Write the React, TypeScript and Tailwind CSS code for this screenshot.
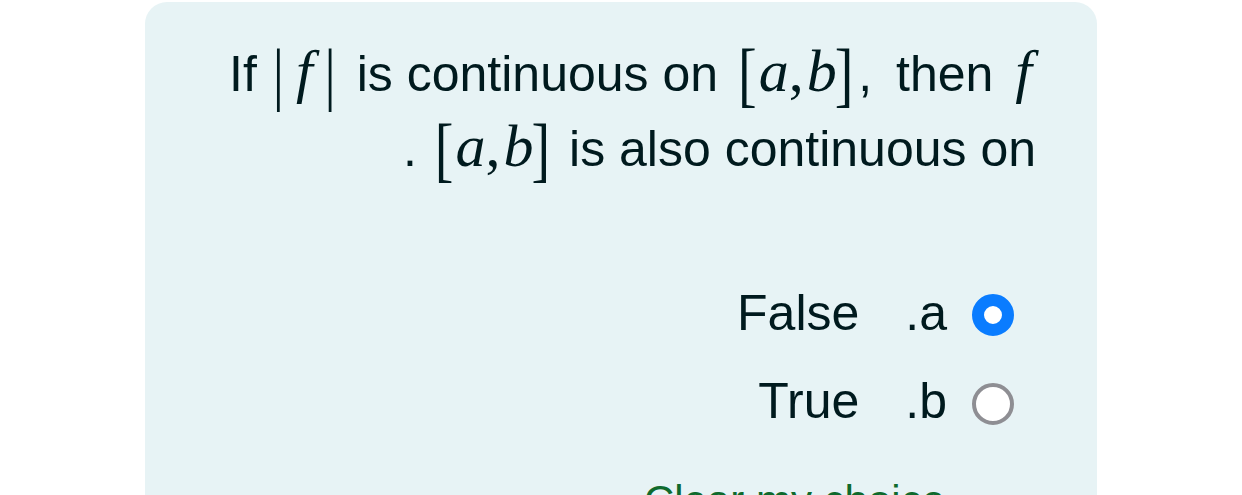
import React from "react";

const math = "font-['Liberation_Serif',serif] italic text-[60px] leading-[20px]";
const roman = "font-['Liberation_Serif',serif] not-italic text-[60px] leading-[20px]";
const big =
  "font-['Liberation_Serif',serif] not-italic text-[56px] leading-[20px] inline-block scale-y-[1.3] translate-y-[1px]";
const bar =
  "font-['Liberation_Serif',serif] not-italic text-[56px] leading-[20px] inline-block scale-y-[1.25] translate-y-[1px]";

function Interval({ className = "" }: { className?: string }) {
  return (
    <span className={"whitespace-nowrap mr-[5px] " + className}>
      <span className={big}>[</span>
      <span className={math + " ml-[2px]"}>a</span>
      <span className={roman}>,</span>
      <span className="inline-block w-[3px]" />
      <span className={math + " inline-block w-[28px]"}>b</span>
      <span className={big}>]</span>
    </span>
  );
}

function Radio({ checked }: { checked: boolean }) {
  return checked ? (
    <span className="block w-[42px] h-[42px] rounded-full border-[12px] border-[#0a7cff] bg-white translate-y-[2px]" />
  ) : (
    <span className="block w-[42px] h-[42px] rounded-full border-[4px] border-[#8e8e93] bg-white translate-y-[3px]" />
  );
}

function Option({ num, label, checked }: { num: string; label: string; checked: boolean }) {
  return (
    <div className="flex h-[88px] items-center justify-end">
      <span className="leading-none">{label}</span>
      <span className="ml-[46px] leading-none">{num}</span>
      <span className="ml-[25px]">
        <Radio checked={checked} />
      </span>
    </div>
  );
}

export default function App() {
  return (
    <div className="w-[1242px] h-[495px] overflow-hidden bg-white font-['Liberation_Sans',Arial,sans-serif] text-[#001a1e]">
      <div className="mx-auto mt-[2px] w-[952px] h-[600px] rounded-t-[22px] bg-[#e7f3f5] pt-[35px]">
        <div className="pr-[61px] text-right text-[50px] leading-[75px]">
          <div className="whitespace-nowrap">
            If <span className={bar + " ml-[2px]"}>|</span>
            <span className={math + " ml-[12px]"}>f</span>
            <span className={bar + " ml-[12px] mr-[7px]"}>|</span> is continuous on{" "}
            <Interval className="ml-[6px]" />, <span className="ml-[10px]">then</span>{" "}
            <span className={math + " ml-[8px] mr-[4px]"}>f</span>
          </div>
          <div className="whitespace-nowrap">
            .<span className="inline-block w-[18px]" />
            <Interval /> is also continuous on
          </div>
        </div>
        <div className="mt-[82px] pr-[83px] text-[50px]">
          <Option num=".a" label="False" checked={true} />
          <Option num=".b" label="True" checked={false} />
        </div>
        <div className="mt-[35px] pr-[152px] text-right">
          <span className="text-[42px] leading-none text-[#0f6a2d]">Clear my choice</span>
        </div>
      </div>
    </div>
  );
}
